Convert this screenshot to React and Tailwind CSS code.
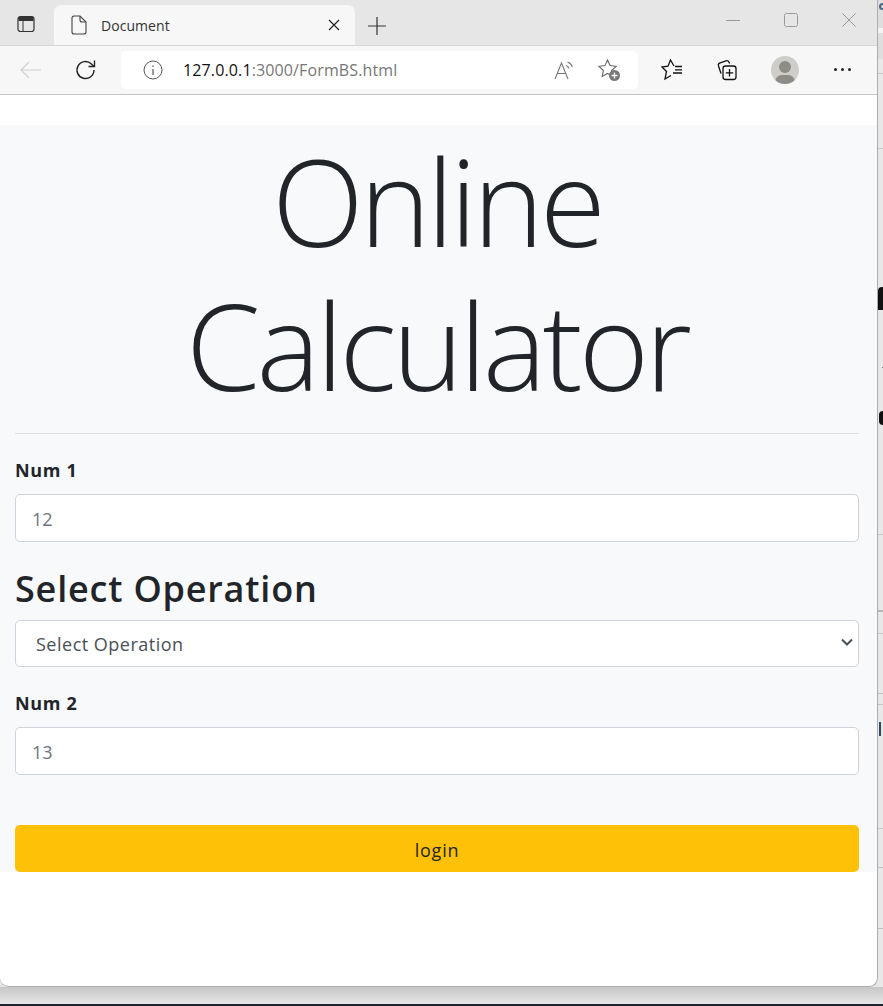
const ui = { fontFamily: '"Open Sans", "Noto Sans", sans-serif' };

function TabBar() {
  return (
    <div className="flex h-[46px] items-end border-b border-[#d6d6d6] bg-[#e6e6e6]">
      <div className="flex h-[39px] w-[54px] items-center justify-center pb-[4px] pr-[2px]">
        <svg width="20" height="20" viewBox="0 0 20 20" fill="none">
          <rect x="2" y="2.5" width="16" height="15" rx="2.5" stroke="#333" strokeWidth="1.2" />
          <path d="M2.5 7h15V4.5a2 2 0 0 0-2-2h-11a2 2 0 0 0-2 2z" fill="#333" />
          <path d="M7 7v10" stroke="#333" strokeWidth="1" />
        </svg>
      </div>
      <div className="flex h-[40px] w-[301px] items-center rounded-t-[7px] bg-[#f7f7f7] pl-[16px] pr-[15px]">
        <svg width="18" height="20" viewBox="0 0 18 20" fill="none" stroke="#444" strokeWidth="1.1">
          <path d="M2 3a2 2 0 0 1 2-2h6l6 6v10a2 2 0 0 1-2 2H4a2 2 0 0 1-2-2z" />
          <path d="M10 1v4a2 2 0 0 0 2 2h4" />
        </svg>
        <span className="ml-[13px] flex-1 text-[14px] tracking-[0.05px] text-[#333]">Document</span>
        <svg width="12" height="12" viewBox="0 0 12 12" stroke="#222" strokeWidth="1.2">
          <path d="M1 1l10 10M11 1L1 11" />
        </svg>
      </div>
      <div className="flex h-[39px] w-[44px] items-center justify-center">
        <svg width="18" height="18" viewBox="0 0 18 18" stroke="#333" strokeWidth="1.2">
          <path d="M9 0v18M0 9h18" />
        </svg>
      </div>
      <div className="flex h-full flex-1 items-start justify-end gap-[44px] pr-[21px] pt-[13px]">
        <svg width="14" height="14" viewBox="0 0 14 14" stroke="#999" strokeWidth="1">
          <path d="M0 7.5h14" />
        </svg>
        <svg width="14" height="14" viewBox="0 0 14 14" fill="none" stroke="#999" strokeWidth="1">
          <rect x="0.5" y="0.5" width="13" height="13" rx="2" />
        </svg>
        <svg width="14" height="14" viewBox="0 0 14 14" stroke="#999" strokeWidth="1">
          <path d="M0.5 0.5l13 13M13.5 0.5l-13 13" />
        </svg>
      </div>
    </div>
  );
}

function ToolBar() {
  return (
    <div className="flex h-[49px] items-center border-b border-[#c4c4c4] bg-[#f7f7f7] pb-[1px]">
      <div className="flex w-[121px] items-center pl-[20px]">
        <svg width="22" height="18" viewBox="0 0 22 18" fill="none" stroke="#d0d0d0" strokeWidth="1.2">
          <path d="M21 9H1M9 1L1 9l8 8" />
        </svg>
        <svg className="ml-[33px]" width="22" height="22" viewBox="0 0 22 22" fill="none" stroke="#222" strokeWidth="1.4">
          <path d="M19 11a8.5 8.5 0 1 1-2.6-6.1L19 7.5" />
          <path d="M19.5 1.5v6h-6" />
        </svg>
      </div>
      <div className="flex h-[38px] w-[517px] items-center rounded-[5px] bg-white pl-[22px] pr-[17px]">
        <svg width="20" height="20" viewBox="0 0 20 20" fill="none" stroke="#555" strokeWidth="1">
          <circle cx="10" cy="10" r="9" />
          <path d="M10 9v6M10 5.5v1.5" strokeWidth="1.2" />
        </svg>
        <div className="ml-[20px] flex-1 text-[16px] tracking-[0.13px] text-[#777]">
          <span className="text-[#111]">127.0.0.1</span>:3000/FormBS.html
        </div>
        <svg width="22" height="22" viewBox="0 0 22 22" fill="none" stroke="#777" strokeWidth="1.1">
          <path d="M2 20L8.5 4 15 20M4.5 14.5h8" />
          <path d="M13 6.5c1.5.5 2.5 1.5 3 3M14.5 3c2.5.8 4 2.3 4.8 4.8" />
        </svg>
        <svg className="ml-[22px]" width="24" height="24" viewBox="0 0 24 24" fill="none">
          <path d="M10.5 2l2.6 5.6 6 .7-4.5 4.2 1.2 6-5.3-3-5.3 3 1.2-6L2 8.3l6-.7z" stroke="#666" strokeWidth="1.1" />
          <circle cx="17.5" cy="17.5" r="5.5" fill="#777" />
          <path d="M17.5 14.5v6M14.5 17.5h6" stroke="#fff" strokeWidth="1.3" />
        </svg>
      </div>
      <div className="flex items-center pl-[23px]">
        <svg width="23" height="22" viewBox="0 0 23 22" fill="none" stroke="#111" strokeWidth="1.3">
          <path d="M13 7L9.5 1 7 7.2 1 8l4.5 4.5L4 20l6-3.5" />
          <path d="M14 7.5h7M14 10.8h7M12 14h9" />
        </svg>
        <svg className="ml-[32px]" width="22" height="22" viewBox="0 0 22 22" fill="none" stroke="#111" strokeWidth="1.3">
          <path d="M5 14.5L2.5 7a2.5 2.5 0 0 1 1.6-3.1L10 1.8a2.5 2.5 0 0 1 3 1.4l.6 1.3" />
          <rect x="7" y="7" width="13" height="13.5" rx="2.5" />
          <path d="M13.5 10v7.5M9.8 13.8h7.4" />
        </svg>
        <div className="ml-[33px] h-[28px] w-[28px] overflow-hidden rounded-full bg-[#cfcdca]">
          <div className="mx-auto mt-[5px] h-[12px] w-[12px] rounded-full bg-[#8f8b87]" />
          <div className="mx-auto mt-[2px] h-[14px] w-[20px] rounded-full bg-[#8f8b87]" />
        </div>
        <div className="ml-[35px] flex gap-[4px]">
          <div className="h-[3px] w-[3px] rounded-full bg-[#222]" />
          <div className="h-[3px] w-[3px] rounded-full bg-[#222]" />
          <div className="h-[3px] w-[3px] rounded-full bg-[#222]" />
        </div>
      </div>
    </div>
  );
}

function Field({ label, placeholder }) {
  return (
    <div>
      <label className="mb-[10px] block text-[18px] font-bold leading-[27px] tracking-[0.7px] text-[#212529]">{label}</label>
      <input
        placeholder={placeholder}
        className="block h-[48px] w-full rounded-[5px] border border-[#ced4da] bg-white px-[16px] pt-[2px] text-[18px] placeholder:text-[#6c757d]"
      />
    </div>
  );
}

// bits of the window behind, showing down the right edge
function BehindStrip() {
  return (
    <div className="relative h-full w-[5px] bg-[#e8e8e8]">
      <div className="absolute left-0 top-0 h-[28px] w-full bg-[#dedede]" />
      <div className="absolute left-[1px] top-[3px] h-[7px] w-[4px] rounded-l-full border-2 border-r-0 border-[#4a6a86]" />
      <div className="absolute left-0 top-[28px] h-[5px] w-full bg-[#f4f4f4]" />
      <div className="absolute left-0 top-[33px] h-[26px] w-full bg-[#dedede]" />
      <div className="absolute left-0 top-[73px] h-px w-full bg-[#c8c8c8]" />
      <div className="absolute left-0 top-[148px] h-px w-full bg-[#c8c8c8]" />
      <div className="absolute left-0 top-[287px] h-[23px] w-[5px] rounded-tl-[4px] bg-[#111]" />
      <div className="absolute left-[4px] top-[367px] h-px w-px bg-[#777]" />
      <div className="absolute left-px top-[411px] h-[14px] w-[4px] rounded-l-full bg-[#111]" />
      <div className="absolute left-0 top-[534px] h-px w-full bg-[#c8c8c8]" />
      <div className="absolute left-0 top-[610px] h-[2px] w-full bg-[#b8b8b8]" />
      <div className="absolute left-0 top-[633px] h-px w-full bg-[#c8c8c8]" />
      <div className="absolute left-0 top-[693px] h-px w-full bg-[#c0c0c0]" />
      <div className="absolute left-0 top-[704px] h-px w-full bg-[#c8c8c8]" />
      <div className="absolute left-[1px] top-[722px] h-[14px] w-[2px] bg-[#2a4a6a]" />
      <div className="absolute left-0 top-[828px] h-px w-full bg-[#c8c8c8]" />
      <div className="absolute left-0 top-[867px] h-px w-full bg-[#c0c0c0]" />
      <div className="absolute left-0 top-[928px] h-px w-full bg-[#c0c0c0]" />
    </div>
  );
}

export default function App() {
  return (
    <div style={ui} className="flex h-[1006px] w-[883px] flex-col overflow-hidden bg-[#e4e4e4]">
      <div className="flex h-[987px]">
        <div className="flex w-[878px] flex-col overflow-hidden rounded-b-[9px] border-b border-r border-[#adadad] bg-white">
          <TabBar />
          <ToolBar />
          <div className="mt-[30px] h-[747px] bg-[#f8f9fa] pl-[15px] pr-[18px]">
            <h1 className="pt-[4px] text-center text-[120px] font-light leading-[144px] tracking-[-3.9px] text-[#212529]">
              Online Calculator
            </h1>
            <hr className="mt-[16px] border-[#dcdee0]" />
            <div className="mt-[23px]">
              <Field label="Num 1" placeholder="12" />
            </div>
            <h2 className="mt-[25px] text-[36px] font-semibold leading-[43px] tracking-[0.8px] text-[#212529]">
              Select Operation
            </h2>
            <div className="relative mt-[10px]">
              <select className="block h-[47px] w-full appearance-none rounded-[5px] border border-[#ced4da] bg-white pl-[20px] pt-[2px] text-[18px] tracking-[0.5px] text-[#495057]">
                <option>Select Operation</option>
              </select>
              <svg className="absolute right-[6px] top-[18px]" width="12" height="9" viewBox="0 0 12 9" fill="none" stroke="#495057" strokeWidth="2">
                <path d="M1 1.5l5 5 5-5" />
              </svg>
            </div>
            <div className="mt-[23px]">
              <Field label="Num 2" placeholder="13" />
            </div>
            <button className="mt-[50px] block h-[47px] w-full rounded-[5px] bg-[#ffc107] pt-[3px] text-[18px] tracking-[0.8px] text-[#212529]">
              login
            </button>
          </div>
        </div>
        <BehindStrip />
      </div>
      <div className="flex-1 bg-linear-to-b from-[#c6c6c6] to-[#e6e6e6]" />
      <div className="h-[2px] bg-[#1b2530]" />
    </div>
  );
}
